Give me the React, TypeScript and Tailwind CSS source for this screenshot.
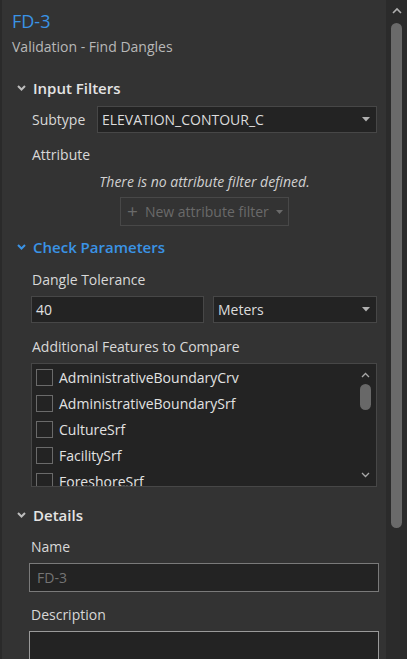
import React from "react";

const items = [
  "AdministrativeBoundaryCrv",
  "AdministrativeBoundarySrf",
  "CultureSrf",
  "FacilitySrf",
  "ForeshoreSrf",
];

function Chevron({ color = "#bdbdbd" }: { color?: string }) {
  return (
    <svg width="9" height="6" viewBox="0 0 9 6" className="shrink-0">
      <polyline points="1,1 4.5,4.5 8,1" fill="none" stroke={color} strokeWidth="2" />
    </svg>
  );
}

function Caret() {
  return (
    <svg width="8" height="5" viewBox="0 0 8 5" className="shrink-0">
      <polygon points="0,0 8,0 4,4.5" fill="#b0b0b0" />
    </svg>
  );
}

function SmallArrow({ up }: { up?: boolean }) {
  return (
    <svg width="9" height="6" viewBox="0 0 9 6">
      <polyline
        points={up ? "1,5 4.5,1.5 8,5" : "1,1 4.5,4.5 8,1"}
        fill="none"
        stroke="#a8a8a8"
        strokeWidth="1.3"
      />
    </svg>
  );
}

function SectionHeader({ title, active }: { title: string; active?: boolean }) {
  return (
    <div className="flex h-[22px] items-center">
      <div className="flex w-[31px] justify-end pr-[7px]">
        <Chevron color={active ? "#3a93e6" : "#bdbdbd"} />
      </div>
      <span
        className={
          active
            ? "text-[15px] font-semibold text-[#3a93e6]"
            : "text-[15px] font-semibold text-[#e4e4e4]"
        }
      >
        {title}
      </span>
    </div>
  );
}

export default function App() {
  return (
    <div className="flex h-[659px] w-[407px] overflow-hidden border-l-2 border-[#2a2a2a] bg-[#333333] font-['Segoe_UI','Open_Sans',sans-serif] text-[14px] text-[#d8d8d8]">
      {/* PANEL CONTENT */}
      <div className="min-w-0 flex-1 overflow-hidden">
        <div className="flex flex-col">
          <div className="mt-[9px] h-[24px] pl-[10px] text-[18px] leading-[24px] text-[#3a93e6]">FD-3</div>
          <div className="mt-[4px] h-[20px] pl-[10px] leading-[20px] text-[#b8b8b8]">
            Validation - Find Dangles
          </div>

          {/* INPUT FILTERS */}
          <div className="mt-[20px]">
            <SectionHeader title="Input Filters" />
          </div>
          <div className="mt-[7px] flex h-[27px] items-center pl-[30px] pr-[9px]">
            <span className="w-[65px]">Subtype</span>
            <div className="flex h-full flex-1 items-center justify-between border border-[#474747] bg-[#232323] pl-[4px] pr-[6px] text-[#dcdcdc]">
              <span>ELEVATION_CONTOUR_C</span>
              <Caret />
            </div>
          </div>
          <div className="mt-[12px] h-[20px] pl-[30px] leading-[20px]">Attribute</div>
          <div className="mt-[7px] h-[20px] pl-[30px] pr-[9px] text-center italic leading-[20px] text-[#d0d0d0]">
            There is no attribute filter defined.
          </div>
          <div className="mt-[5px] flex justify-center pl-[30px] pr-[9px]">
            <div className="flex h-[29px] w-[169px] items-center gap-[7px] whitespace-nowrap border border-[#484848] pl-[6px] text-[#6a6a6a]">
              <span className="text-[19px] leading-none">+</span>
              <span className="text-[14px]">New attribute filter</span>
              <svg width="7" height="4" viewBox="0 0 7 4" className="shrink-0">
                <polygon points="0,0 7,0 3.5,4" fill="#6a6a6a" />
              </svg>
            </div>
          </div>

          {/* CHECK PARAMETERS */}
          <div className="mt-[10px]">
            <SectionHeader title="Check Parameters" active />
          </div>
          <div className="mt-[12px] h-[20px] pl-[30px] leading-[20px]">Dangle Tolerance</div>
          <div className="mt-[6px] flex h-[27px] gap-[9px] pl-[29px] pr-[9px]">
            <div className="flex w-[173px] items-center border border-[#474747] bg-[#232323] pl-[4px] text-[#e0e0e0]">
              40
            </div>
            <div className="flex flex-1 items-center justify-between border border-[#474747] bg-[#232323] pl-[4px] pr-[6px] text-[#dcdcdc]">
              <span>Meters</span>
              <Caret />
            </div>
          </div>
          <div className="mt-[14px] h-[20px] pl-[30px] leading-[20px]">Additional Features to Compare</div>
          <div className="ml-[29px] mr-[9px] mt-[6px] flex h-[124px] border border-[#474747] bg-[#232323]">
            <div className="flex-1 overflow-hidden">
              {items.map((name) => (
                <div key={name} className="flex h-[26px] items-center gap-[6px] pl-[4px] text-[#e2e2e2]">
                  <div className="h-[17px] w-[17px] shrink-0 border border-[#6a6a6a]" />
                  <span>{name}</span>
                </div>
              ))}
            </div>
            <div className="flex w-[21px] flex-col items-center pt-[8px]">
              <SmallArrow up />
              <div className="mt-[6px] h-[26px] w-[11px] rounded-full bg-[#686868]" />
              <div className="flex-1" />
              <div className="mb-[8px]">
                <SmallArrow />
              </div>
            </div>
          </div>

          {/* DETAILS */}
          <div className="mt-[17px]">
            <SectionHeader title="Details" />
          </div>
          <div className="mt-[11px] h-[20px] pl-[29px] leading-[20px]">Name</div>
          <div className="ml-[27px] mr-[7px] mt-[6px] flex h-[29px] items-center border border-[#7a7a7a] bg-[#232323] pl-[7px] text-[#747474]">
            FD-3
          </div>
          <div className="mt-[13px] h-[20px] pl-[29px] leading-[20px]">Description</div>
          <div className="ml-[27px] mr-[7px] mt-[6px] h-[60px] border border-[#9a9a9a] bg-[#232323]" />
        </div>
      </div>

      {/* SCROLLBAR */}
      <div className="flex w-[21px] shrink-0 flex-col items-center bg-[#2b2b2b] pt-[7px]">
        <svg width="10" height="7" viewBox="0 0 10 7">
          <polyline points="1,6 5,2 9,6" fill="none" stroke="#b0b0b0" strokeWidth="1.6" />
        </svg>
        <div className="mt-[9px] h-[505px] w-[11px] shrink-0 rounded-full bg-[#6a6a6a]" />
      </div>
    </div>
  );
}
